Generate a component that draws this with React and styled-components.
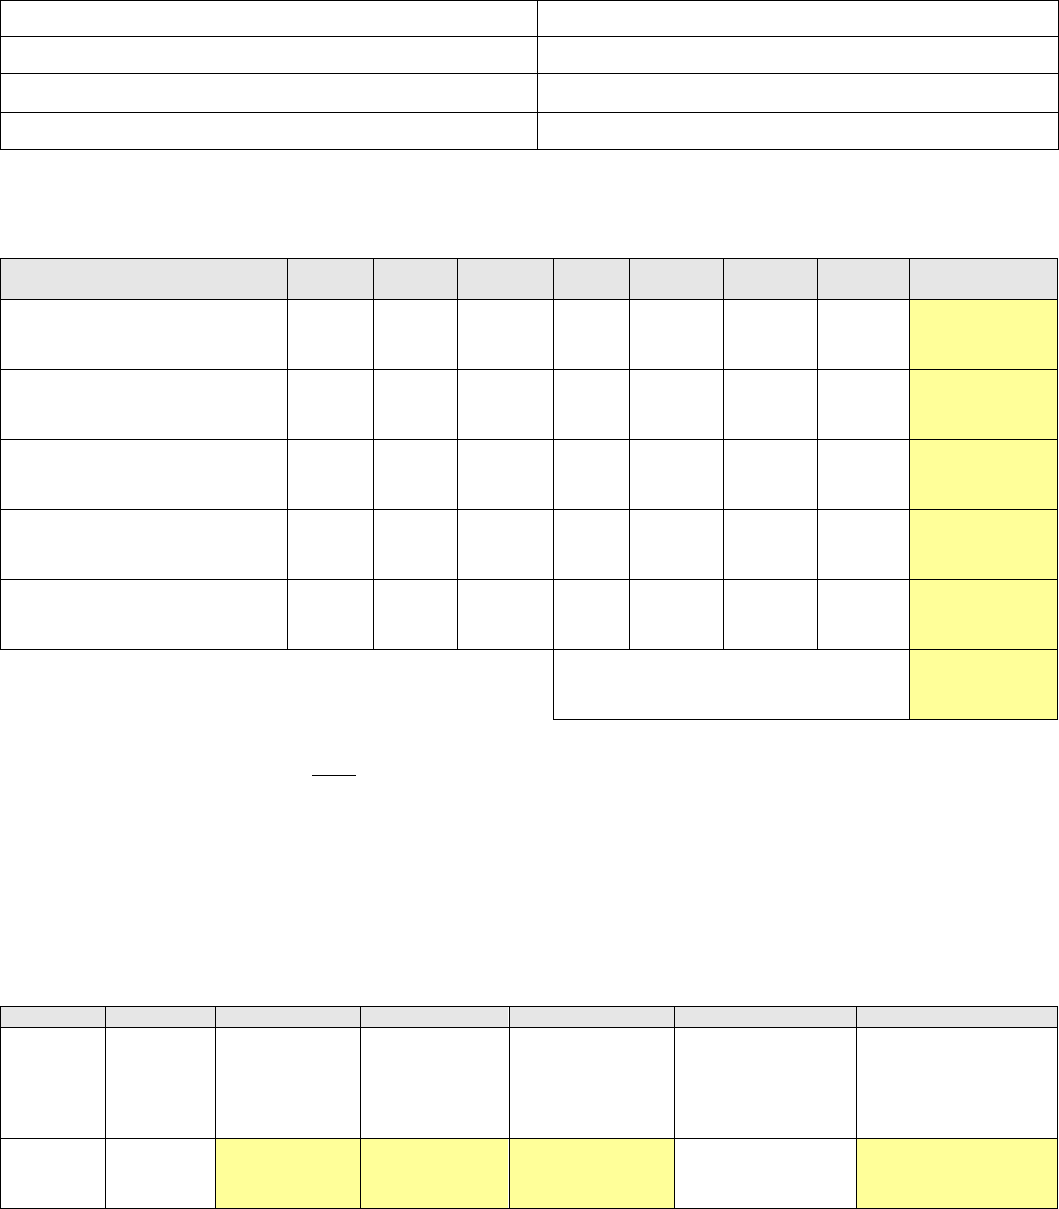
import React from "react";
import styled, { createGlobalStyle } from "styled-components";

const GlobalStyle = createGlobalStyle`
  html, body {
    margin: 0;
    padding: 0;
    background: #fff;
    font-family: "Liberation Sans", Arial, sans-serif;
    font-size: 13px;
    color: #000;
  }
`;

const FILLS = {
  none: "transparent",
  head: "#e6e6e6",
  mark: "#ffff99",
};

const Page = styled.div`
  width: 1059px;
  display: flex;
  flex-direction: column;
`;

const Sheet = styled.table`
  border-collapse: collapse;
  table-layout: fixed;
  width: ${(p) => p.$width}px;
  margin-top: ${(p) => p.$top || 0}px;
`;

const Cell = styled.td`
  padding: 0;
  height: ${(p) => p.$h}px;
  border: 1px solid #000;
  background: ${(p) => FILLS[p.$fill || "none"]};
  box-shadow: ${(p) => (p.$seam ? "inset -1px 0 0 #fff" : "none")};
  ${(p) => p.$blank && "border-left: none; border-bottom: none;"}
`;

const Note = styled.p`
  margin: 0;
  margin-top: 38px;
  height: 21px;
  line-height: 21px;
`;

const Blank = styled.span`
  display: inline-block;
  width: 44px;
  height: 17px;
  margin-left: 312px;
  border-bottom: 1px solid #000;
`;

const Cols = ({ widths }) => (
  <colgroup>
    {widths.map((w, i) => (
      <col key={i} style={{ width: w }} />
    ))}
  </colgroup>
);

// top info block
const infoRows = [35, 36, 38, 36];

// item table
const itemCols = [287, 86, 84, 96, 76, 94, 94, 92, 148];
const itemRows = 5;

// schedule table
const schedCols = [105, 110, 145, 149, 165, 182, 201];
const schedMarks = [false, false, true, true, true, false, true];

export default function App() {
  return (
    <Page>
      <GlobalStyle />

      <Sheet $width={1058}>
        <Cols widths={[537, 521]} />
        <tbody>
          {infoRows.map((h, i) => (
            <tr key={i}>
              <Cell $h={h} />
              <Cell $h={h} />
            </tr>
          ))}
        </tbody>
      </Sheet>

      <Sheet $width={1058} $top={108}>
        <Cols widths={itemCols} />
        <thead>
          <tr>
            {itemCols.map((_, i) => (
              <Cell key={i} as="th" $h={40} $fill="head" />
            ))}
          </tr>
        </thead>
        <tbody>
          {Array.from({ length: itemRows }).map((_, r) => (
            <tr key={r}>
              {itemCols.map((_, i) => (
                <Cell key={i} $h={69} $fill={i === itemCols.length - 1 ? "mark" : "none"} />
              ))}
            </tr>
          ))}
          <tr>
            <Cell colSpan={4} $h={69} $blank />
            <Cell colSpan={4} $h={69} />
            <Cell $h={69} $fill="mark" />
          </tr>
        </tbody>
      </Sheet>

      <Note>
        <Blank />
      </Note>

      <Sheet $width={1058} $top={227}>
        <Cols widths={schedCols} />
        <thead>
          <tr>
            {schedCols.map((_, i) => (
              <Cell key={i} as="th" $h={20} $fill="head" $seam={i === 3} />
            ))}
          </tr>
        </thead>
        <tbody>
          <tr>
            {schedCols.map((_, i) => (
              <Cell key={i} $h={110} />
            ))}
          </tr>
          <tr>
            {schedCols.map((_, i) => (
              <Cell
                key={i}
                $h={69}
                $fill={schedMarks[i] ? "mark" : "none"}
                $seam={i === 3 && schedMarks[i]}
              />
            ))}
          </tr>
        </tbody>
      </Sheet>
    </Page>
  );
}
